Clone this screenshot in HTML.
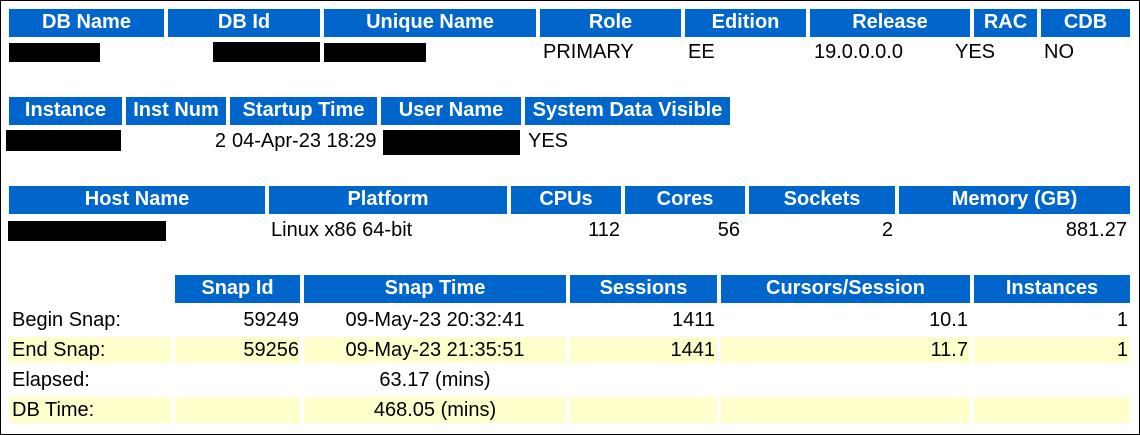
<!DOCTYPE html>
<html><head><meta charset="utf-8"><style>
body{margin:0;width:1140px;height:435px;overflow:hidden;background:#fff;font-family:"Liberation Sans",Arial,sans-serif;}
#f{position:absolute;left:0;top:0;width:1138px;height:433px;border:1px solid #000;}
.h,.t,.b,.y{position:absolute;}
.h{background:#0066cc;color:#fff;font-weight:bold;font-size:20px;text-align:center;line-height:26px;height:28px;white-space:nowrap;overflow:hidden;}
.t{font-size:20px;color:#000;line-height:26px;white-space:nowrap;}
.r{text-align:right;}
.c{text-align:center;}
.b{background:#000;}
.y{background:#ffffcc;}
</style></head><body><div id="f"></div>
<div class="h" style="left:9px;top:9px;width:155px">DB Name</div>
<div class="h" style="left:168px;top:9px;width:152px">DB Id</div>
<div class="h" style="left:324px;top:9px;width:212px">Unique Name</div>
<div class="h" style="left:540px;top:9px;width:141px">Role</div>
<div class="h" style="left:685px;top:9px;width:121px">Edition</div>
<div class="h" style="left:810px;top:9px;width:160px">Release</div>
<div class="h" style="left:974px;top:9px;width:63px">RAC</div>
<div class="h" style="left:1041px;top:9px;width:89px">CDB</div>
<div class="b" style="left:9px;top:43px;width:91px;height:19px"></div>
<div class="b" style="left:213px;top:42px;width:107px;height:20px"></div>
<div class="b" style="left:324px;top:43px;width:102px;height:19px"></div>
<div class="t" style="left:543px;top:39px">PRIMARY</div>
<div class="t" style="left:688px;top:39px">EE</div>
<div class="t" style="left:814px;top:39px">19.0.0.0.0</div>
<div class="t" style="left:955px;top:39px">YES</div>
<div class="t" style="left:1044px;top:39px">NO</div>
<div class="h" style="left:9px;top:97px;width:113px">Instance</div>
<div class="h" style="left:126px;top:97px;width:100px">Inst Num</div>
<div class="h" style="left:230px;top:97px;width:147px">Startup Time</div>
<div class="h" style="left:381px;top:97px;width:140px">User Name</div>
<div class="h" style="left:525px;top:97px;width:205px">System Data Visible</div>
<div class="b" style="left:6px;top:130px;width:115px;height:21px"></div>
<div class="b" style="left:383px;top:130px;width:137px;height:25px"></div>
<div class="t r" style="left:126px;top:128px;width:100px">2</div>
<div class="t" style="left:232px;top:128px">04-Apr-23 18:29</div>
<div class="t" style="left:528px;top:128px">YES</div>
<div class="h" style="left:9px;top:186px;width:256px">Host Name</div>
<div class="h" style="left:269px;top:186px;width:238px">Platform</div>
<div class="h" style="left:511px;top:186px;width:110px">CPUs</div>
<div class="h" style="left:625px;top:186px;width:120px">Cores</div>
<div class="h" style="left:749px;top:186px;width:146px">Sockets</div>
<div class="h" style="left:899px;top:186px;width:231px">Memory (GB)</div>
<div class="b" style="left:8px;top:221px;width:158px;height:20px"></div>
<div class="t" style="left:271px;top:217px">Linux x86 64-bit</div>
<div class="t r" style="left:511px;top:217px;width:109px">112</div>
<div class="t r" style="left:625px;top:217px;width:115px">56</div>
<div class="t r" style="left:749px;top:217px;width:144px">2</div>
<div class="t r" style="left:899px;top:217px;width:228px">881.27</div>
<div class="h" style="left:175px;top:275px;width:125px">Snap Id</div>
<div class="h" style="left:304px;top:275px;width:262px">Snap Time</div>
<div class="h" style="left:570px;top:275px;width:147px">Sessions</div>
<div class="h" style="left:721px;top:275px;width:249px">Cursors/Session</div>
<div class="h" style="left:974px;top:275px;width:156px">Instances</div>
<div class="y" style="left:9px;top:337px;width:162px;height:26px"></div>
<div class="y" style="left:175px;top:337px;width:125px;height:26px"></div>
<div class="y" style="left:304px;top:337px;width:262px;height:26px"></div>
<div class="y" style="left:570px;top:337px;width:147px;height:26px"></div>
<div class="y" style="left:721px;top:337px;width:249px;height:26px"></div>
<div class="y" style="left:974px;top:337px;width:156px;height:26px"></div>
<div class="y" style="left:9px;top:397px;width:162px;height:26px"></div>
<div class="y" style="left:175px;top:397px;width:125px;height:26px"></div>
<div class="y" style="left:304px;top:397px;width:262px;height:26px"></div>
<div class="y" style="left:570px;top:397px;width:147px;height:26px"></div>
<div class="y" style="left:721px;top:397px;width:249px;height:26px"></div>
<div class="y" style="left:974px;top:397px;width:156px;height:26px"></div>
<div class="t" style="left:12px;top:307px">Begin Snap:</div>
<div class="t r" style="left:175px;top:307px;width:124px">59249</div>
<div class="t c" style="left:304px;top:307px;width:262px">09-May-23 20:32:41</div>
<div class="t r" style="left:570px;top:307px;width:145px">1411</div>
<div class="t r" style="left:721px;top:307px;width:247px">10.1</div>
<div class="t r" style="left:974px;top:307px;width:154px">1</div>
<div class="t" style="left:12px;top:337px">End Snap:</div>
<div class="t r" style="left:175px;top:337px;width:124px">59256</div>
<div class="t c" style="left:304px;top:337px;width:262px">09-May-23 21:35:51</div>
<div class="t r" style="left:570px;top:337px;width:145px">1441</div>
<div class="t r" style="left:721px;top:337px;width:247px">11.7</div>
<div class="t r" style="left:974px;top:337px;width:154px">1</div>
<div class="t" style="left:12px;top:367px">Elapsed:</div>
<div class="t c" style="left:304px;top:367px;width:262px">63.17 (mins)</div>
<div class="t" style="left:12px;top:397px">DB Time:</div>
<div class="t c" style="left:304px;top:397px;width:262px">468.05 (mins)</div>
</body></html>
